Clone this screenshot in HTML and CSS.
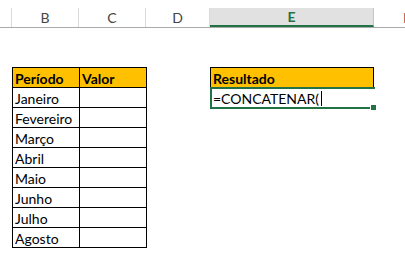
FILE: index.html
```html
<!DOCTYPE html>
<html>
<head>
<meta charset="utf-8">
<link rel="stylesheet" href="styles.css">
</head>
<body>
<div class="colheads">
  <div class="ch ch-a"></div>
  <div class="ch ch-b">B</div>
  <div class="ch ch-c">C</div>
  <div class="ch ch-d">D</div>
  <div class="ch ch-e">E</div>
  <div class="ch ch-f">F</div>
</div>
<div class="sheet">
  <div class="data">
    <div class="cell head">Período</div><div class="cell head">Valor</div>
    <div class="cell">Janeiro</div><div class="cell"></div>
    <div class="cell">Fevereiro</div><div class="cell"></div>
    <div class="cell">Março</div><div class="cell"></div>
    <div class="cell">Abril</div><div class="cell"></div>
    <div class="cell">Maio</div><div class="cell"></div>
    <div class="cell">Junho</div><div class="cell"></div>
    <div class="cell">Julho</div><div class="cell"></div>
    <div class="cell">Agosto</div><div class="cell"></div>
  </div>
  <div class="result">
    <div class="res-head">Resultado</div>
    <div class="res-cell"><span class="formula">=CONCATENAR(</span><span class="caret"></span><span class="handle"></span></div>
  </div>
</div>
</body>
</html>
```
FILE: styles.css
```css
html, body { margin: 0; padding: 0; background: #fff; }
body {
  width: 405px; height: 267px; overflow: hidden;
  font-family: Lato, "Liberation Sans", sans-serif;
  font-size: 14px; color: #000;
}
.colheads {
  display: flex; margin-top: 8px; height: 19px;
  border-bottom: 1px solid #ababab;
}
.ch {
  box-sizing: border-box; height: 19px;
  border-right: 1px solid #dadada;
  text-align: center; line-height: 19px;
  color: #444; font-size: 14px;
}
.ch-a { width: 12px; }
.ch-b { width: 67px; }
.ch-c { width: 67px; }
.ch-d { width: 64px; }
.ch-e {
  width: 164px; background: #e1e1e1; color: #217346; font-weight: bold;
  border-right: 1px solid #c6c6c6; border-bottom: 2px solid #217346; line-height: 17px;
}
.ch-f { flex: 1; text-align: left; padding-left: 29px; color: #8a3b4e; border-right: none; overflow: hidden; white-space: nowrap; }
.sheet { display: flex; padding-top: 39px; }
.data {
  margin-left: 12px;
  display: grid; grid-template-columns: 67px 67px;
  grid-auto-rows: 20px;
  border-left: 1px solid #000; border-top: 1px solid #000;
  width: 134px; box-sizing: content-box;
}
.cell {
  border-right: 1px solid #000; border-bottom: 1px solid #000;
  padding-left: 2px; line-height: 21px; white-space: nowrap; overflow: visible;
}
.cell.head { background: #ffc000; font-weight: bold; }
.result { margin-left: 63px; width: 164px; }
.res-head {
  box-sizing: border-box; height: 20px; background: #ffc000;
  border: 1px solid #000; border-bottom: none;
  font-weight: bold; padding-left: 2px; line-height: 22px;
}
.res-cell {
  position: relative; box-sizing: border-box; height: 22px; width: 165px;
  border-top: 2px solid #217346; border-bottom: 2px solid #217346; border-left: 2px solid #217346;
  display: flex; align-items: center; padding-left: 1px;
}
.caret { display: inline-block; width: 1px; height: 15px; background: #000; margin-left: 2px; }
.handle {
  position: absolute; right: -2px; bottom: -4px; width: 5px; height: 5px;
  background: #217346; border: 1px solid #fff;
}
```
